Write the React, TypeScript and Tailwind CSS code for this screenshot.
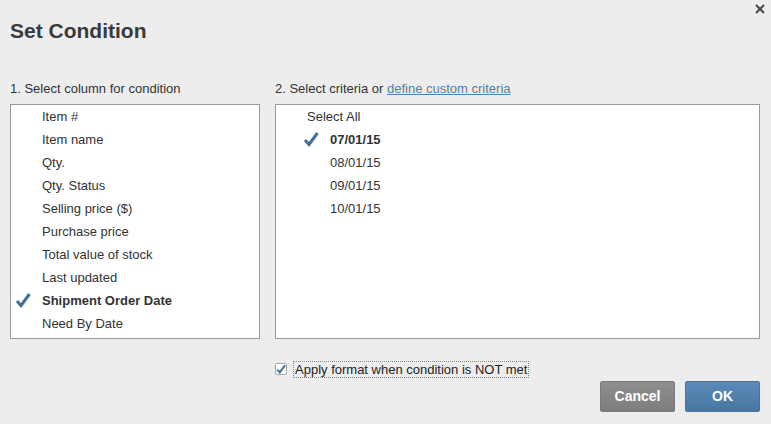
import React from "react"

const columns = [
  "Item #",
  "Item name",
  "Qty.",
  "Qty. Status",
  "Selling price ($)",
  "Purchase price",
  "Total value of stock",
  "Last updated",
  "Shipment Order Date",
  "Need By Date",
]

const dates = ["07/01/15", "08/01/15", "09/01/15", "10/01/15"]

function Check({ className = "" }: { className?: string }) {
  return (
    <svg viewBox="0 0 16 16" className={className} aria-hidden>
      <path
        d="M1.2 8.8 L5.4 13.4 L14.8 1.8 L15 3.2 L6.4 15.2 L4.6 15.2 L0.8 10.4 Z"
        fill="#3f6f9b"
      />
    </svg>
  )
}

export default function App() {
  return (
    <div
      className="relative w-[771px] h-[424px] bg-[#ededed] text-[#333] overflow-hidden"
      style={{ fontFamily: '"Liberation Sans", Arial, sans-serif' }}
    >
      {/* close */}
      <button className="absolute right-[5px] top-[3px] w-[12px] h-[12px] flex items-center justify-center">
        <svg viewBox="0 0 10 10" className="w-[10px] h-[10px]">
          <path d="M1 1 L9 9 M9 1 L1 9" stroke="#444" strokeWidth="2" />
        </svg>
      </button>

      <div className="pl-[10px] pr-[11px] pt-[19px]">
        <h1 className="text-[21px] leading-[24px] font-bold text-[#3a3a3a]">Set Condition</h1>

        <div className="flex gap-[15px] mt-[38px]">
          <div className="w-[250px]">
            <div className="text-[13px] leading-[16px] mb-[7px]">1. Select column for condition</div>
            <div className="h-[235px] bg-white border border-[#999]">
              {columns.map((c, i) => (
                <div key={c} className="relative h-[23px] flex items-center pl-[31px] text-[13px]">
                  {i === 8 && (
                    <svg viewBox="0 0 16 16" className="absolute left-[4px] top-[3px] w-[16px] h-[16px]" aria-hidden>
                      <path d="M2 9 L6 13.5 L14.5 2" stroke="#3f6f9b" strokeWidth="3" fill="none" strokeLinejoin="miter" />
                    </svg>
                  )}
                  <span className={i === 8 ? "font-bold" : ""}>{c}</span>
                </div>
              ))}
            </div>
          </div>

          <div className="w-[485px]">
            <div className="text-[13px] leading-[16px] mb-[7px]">
              2. Select criteria or{" "}
              <a className="text-[#4386b8] underline cursor-pointer">define custom criteria</a>
            </div>
            <div className="h-[235px] bg-white border border-[#999]">
              <div className="h-[23px] flex items-center pl-[31px] text-[13px]">Select All</div>
              {dates.map((d, i) => (
                <div key={d} className="relative h-[23px] flex items-center pl-[54px] text-[13px]">
                  {i === 0 && (
                    <svg viewBox="0 0 16 16" className="absolute left-[27px] top-[3px] w-[16px] h-[16px]" aria-hidden>
                      <path d="M2 9 L6 13.5 L14.5 2" stroke="#3f6f9b" strokeWidth="3" fill="none" strokeLinejoin="miter" />
                    </svg>
                  )}
                  <span className={i === 0 ? "font-bold" : ""}>{d}</span>
                </div>
              ))}
            </div>
          </div>
        </div>

        <div className="flex items-center ml-[265px] mt-[22px] h-[16px]">
          <span className="relative w-[12px] h-[12px] border border-[#a8a8a8] rounded-[2px] bg-white flex items-center justify-center">
            <svg viewBox="0 0 16 16" className="w-[10px] h-[10px]" aria-hidden>
              <path d="M2 9 L6 13.5 L14.5 2" stroke="#3f6f9b" strokeWidth="3.2" fill="none" />
            </svg>
          </span>
          <span className="ml-[6px] text-[13px] leading-[15px] text-[#222] border border-dotted border-[#888] px-[1px]">
            Apply format when condition is NOT met
          </span>
        </div>

        <div className="flex justify-end gap-[10px] mt-[4px]">
          <button className="w-[75px] h-[31px] rounded-[2px] border border-[#7a7a7a] bg-gradient-to-b from-[#8f8f8f] to-[#7d7d7d] text-white text-[14px] font-bold">
            Cancel
          </button>
          <button className="w-[75px] h-[31px] rounded-[2px] border border-[#4a7398] bg-gradient-to-b from-[#5a8bb9] to-[#4a77a2] text-white text-[14px] font-bold">
            OK
          </button>
        </div>
      </div>
    </div>
  )
}
